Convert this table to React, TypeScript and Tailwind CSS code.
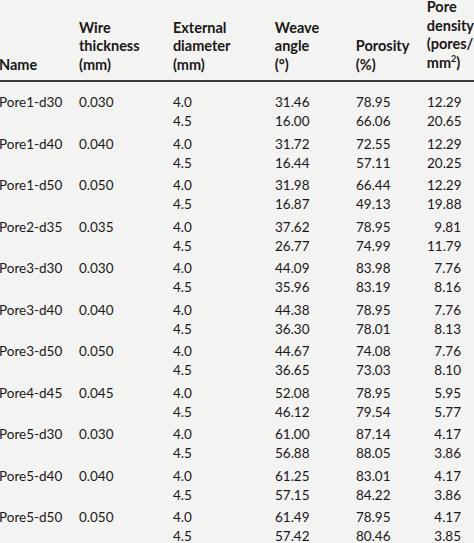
import React from "react";

const rows: [string, string, string[], string[], string[], string[]][] = [
  ["Pore1-d30", "0.030", ["4.0", "4.5"], ["31.46", "16.00"], ["78.95", "66.06"], ["12.29", "20.65"]],
  ["Pore1-d40", "0.040", ["4.0", "4.5"], ["31.72", "16.44"], ["72.55", "57.11"], ["12.29", "20.25"]],
  ["Pore1-d50", "0.050", ["4.0", "4.5"], ["31.98", "16.87"], ["66.44", "49.13"], ["12.29", "19.88"]],
  ["Pore2-d35", "0.035", ["4.0", "4.5"], ["37.62", "26.77"], ["78.95", "74.99"], ["9.81", "11.79"]],
  ["Pore3-d30", "0.030", ["4.0", "4.5"], ["44.09", "35.96"], ["83.98", "83.19"], ["7.76", "8.16"]],
  ["Pore3-d40", "0.040", ["4.0", "4.5"], ["44.38", "36.30"], ["78.95", "78.01"], ["7.76", "8.13"]],
  ["Pore3-d50", "0.050", ["4.0", "4.5"], ["44.67", "36.65"], ["74.08", "73.03"], ["7.76", "8.10"]],
  ["Pore4-d45", "0.045", ["4.0", "4.5"], ["52.08", "46.12"], ["78.95", "79.54"], ["5.95", "5.77"]],
  ["Pore5-d30", "0.030", ["4.0", "4.5"], ["61.00", "56.88"], ["87.14", "88.05"], ["4.17", "3.86"]],
  ["Pore5-d40", "0.040", ["4.0", "4.5"], ["61.25", "57.15"], ["83.01", "84.22"], ["4.17", "3.86"]],
  ["Pore5-d50", "0.050", ["4.0", "4.5"], ["61.49", "57.42"], ["78.95", "80.46"], ["4.17", "3.85"]],
];

export default function App() {
  return (
    <div
      className="w-[474px] h-[543px] overflow-hidden bg-[#f3f3f1] text-[#1a1718] text-[13.5px]"
      style={{ fontFamily: "Lato, 'Noto Sans', sans-serif" }}
    >
      <div className="ml-[-1px]">
        <div className="flex items-end mt-[-2px] font-bold text-[14.5px] leading-[18.5px] whitespace-nowrap pb-[6px]">
          <div className="w-[80px]">Name</div>
          <div className="w-[94px]">
            <div>Wire</div>
            <div>thickness</div>
            <div>(mm)</div>
          </div>
          <div className="w-[102px]">
            <div>External</div>
            <div>diameter</div>
            <div>(mm)</div>
          </div>
          <div className="w-[81px]">
            <div>Weave</div>
            <div>angle</div>
            <div>(°)</div>
          </div>
          <div className="w-[71px]">
            <div>Porosity</div>
            <div>(%)</div>
          </div>
          <div>
            <div>Pore</div>
            <div>density</div>
            <div>(pores/</div>
            <div>
              mm<span className="text-[9px] relative top-[-6px]">2</span>)
            </div>
          </div>
        </div>
        <div className="h-[1.5px] bg-[#3a3a3a]" />
        <div className="pt-[11.5px] leading-[19px]">
          {rows.map((r) => (
            <div key={r[0]} className="flex h-[41.5px]">
              <div className="w-[80px]">{r[0]}</div>
              <div className="w-[94px]">{r[1]}</div>
              <div className="w-[102px]">
                {r[2].map((v, i) => (
                  <div key={i}>{v}</div>
                ))}
              </div>
              <div className="w-[81px]">
                {r[3].map((v, i) => (
                  <div key={i}>{v}</div>
                ))}
              </div>
              <div className="w-[71px]">
                {r[4].map((v, i) => (
                  <div key={i}>{v}</div>
                ))}
              </div>
              <div className="w-[34px] text-right">
                {r[5].map((v, i) => (
                  <div key={i}>{v}</div>
                ))}
              </div>
            </div>
          ))}
        </div>
      </div>
    </div>
  );
}
